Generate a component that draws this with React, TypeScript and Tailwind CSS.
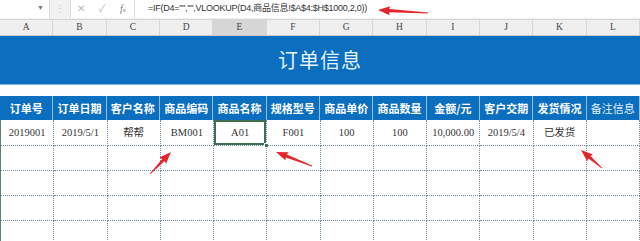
import React from "react";

const cols = ["A", "B", "C", "D", "E", "F", "G", "H", "I", "J", "K", "L"];
const heads = ["订单号", "订单日期", "客户名称", "商品编码", "商品名称", "规格型号", "商品单价", "商品数量", "金额/元", "客户交期", "发货情况", "备注信息"];
const row = ["2019001", "2019/5/1", "帮帮", "BM001", "A01", "F001", "100", "100", "10,000.00", "2019/5/4", "已发货", ""];

// arrow polygon from tail to tip
function arrow(tx: number, ty: number, hx: number, hy: number) {
  const dx = hx - tx;
  const dy = hy - ty;
  const len = Math.sqrt(dx * dx + dy * dy);
  const ux = dx / len;
  const uy = dy / len;
  const px = -uy;
  const py = ux;
  const head = Math.min(11, len * 0.4);
  const bx = hx - ux * head;
  const by = hy - uy * head;
  const pts = [
    [tx + px * 0.4, ty + py * 0.4],
    [bx + px * 1.6, by + py * 1.6],
    [bx - ux * 1 + px * 4.5, by - uy * 1 + py * 4.5],
    [hx, hy],
    [bx - ux * 1 - px * 4.5, by - uy * 1 - py * 4.5],
    [bx - px * 1.6, by - py * 1.6],
    [tx - px * 0.4, ty - py * 0.4],
  ];
  return pts.map((p) => p[0].toFixed(1) + "," + p[1].toFixed(1)).join(" ");
}

export default function App() {
  return (
    <div className="relative w-[640px] h-[241px] overflow-hidden bg-white font-['Liberation_Sans','Noto_Sans_CJK_SC',sans-serif]">
      {/* formula bar */}
      <div className="flex items-center h-[20px] bg-[#f1f1f1] border-b border-[#d4d4d4] pb-[2px]">
        <div className="flex items-center justify-end w-[50px] h-[18px] bg-white border-r border-[#dadada] pr-[5px] text-[7px] text-[#777]">▼</div>
        <div className="w-[20px] text-center text-[10px] text-[#c8c8c8] leading-none">⋮</div>
        <div className="flex items-center h-[18px] w-[64px] bg-white border-l border-[#dadada] text-[#b8b8b8]">
          <span className="w-[20px] text-center text-[10px]">✕</span>
          <span className="w-[22px] text-center text-[10px]">✓</span>
          <span className="w-[20px] text-center text-[10px] italic font-['Liberation_Serif',serif] text-[#777]">
            f<span className="text-[7px]">x</span>
          </span>
        </div>
        <div className="flex-1 flex items-center h-[18px] bg-white border-l border-[#dadada] pl-[13px] text-[9px] tracking-[-0.25px] text-[#333] whitespace-nowrap">
          =IF(D4="","",VLOOKUP(D4,商品信息!$A$4:$H$1000,2,0))
        </div>
      </div>

      {/* column letters */}
      <div className="grid grid-cols-12 h-[16px] bg-[#efefef] border-b border-[#c9c9c9]">
        {cols.map((c) => (
          <div
            key={c}
            className={`flex items-center justify-center border-r border-[#d6d6d6] text-[9.5px] text-[#444] font-['Liberation_Serif',serif] ${c === "E" ? "bg-[#d6d6d6]" : ""}`}
          >
            {c}
          </div>
        ))}
      </div>

      {/* title */}
      <div className="flex items-center justify-center h-[49px] bg-[#0b6ebf] border-b border-[#7fb6e2] text-[20px] text-[#e6f4ff] font-['Noto_Sans_CJK_SC',sans-serif] tracking-[1px]">
        订单信息
      </div>
      <div className="h-[11px] bg-[#fbfdff]" />

      {/* header row */}
      <div className="grid grid-cols-12 h-[24px] bg-[#0b6ebf]">
        {heads.map((h, i) => (
          <div
            key={h}
            className={`flex items-center justify-center border-r border-[#8fc0e6] text-[11px] font-['Noto_Sans_CJK_SC',sans-serif] ${i === 11 ? "font-normal text-[#e2eef8]" : "font-bold text-white"}`}
          >
            {h}
          </div>
        ))}
      </div>

      {/* data row */}
      <div className="grid grid-cols-12 h-[26px] border-l border-[#5f7f6a]">
        {row.map((v, i) => (
          <div
            key={i}
            className={`relative flex items-center justify-center border-r border-b border-dotted border-[#6d8fa6] text-[10.5px] text-[#333] font-['Liberation_Serif','Noto_Sans_CJK_SC',serif] ${i === 4 ? "ring-2 ring-inset ring-[#3d6f50]" : ""}`}
          >
            {v}
            {i === 4 && <div className="absolute -right-[3px] -bottom-[3px] w-[5px] h-[5px] bg-[#3d6f50] border border-white" />}
          </div>
        ))}
      </div>

      {/* empty rows */}
      {[0, 1, 2, 3].map((r) => (
        <div key={r} className="grid grid-cols-12 h-[25px] border-l border-[#5f7f6a]">
          {cols.map((c) => (
            <div key={c} className="border-r border-b border-dotted border-[#6d8fa6]" />
          ))}
        </div>
      ))}

      {/* red arrows */}
      <svg className="absolute inset-0 pointer-events-none" width="640" height="241" viewBox="0 0 640 241">
        <g fill="#e4262b">
          <polygon points={arrow(428, 13, 378, 10)} />
          <polygon points={arrow(150, 174, 171, 152)} />
          <polygon points={arrow(312, 166, 276, 152)} />
          <polygon points={arrow(602, 168, 581, 150)} />
        </g>
      </svg>
    </div>
  );
}
